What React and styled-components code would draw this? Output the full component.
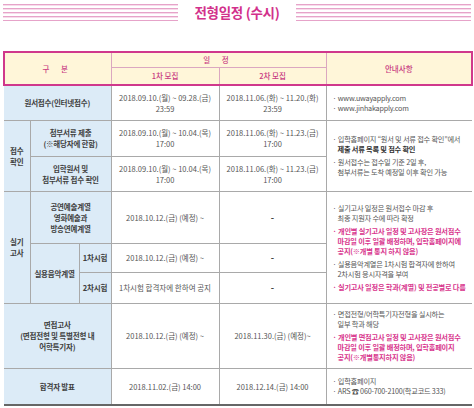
import React from 'react';
import styled, { createGlobalStyle } from 'styled-components';

const GlobalStyle = createGlobalStyle`
  html, body {
    margin: 0;
    padding: 0;
    background: #fff;
  }
  body {
    font-family: "Noto Sans CJK KR", "Noto Sans", sans-serif;
    color: #555;
  }
`;

const Page = styled.div`
  width: 474px;
  height: 408px;
  padding: 3px 3px 0;
  box-sizing: border-box;
  overflow: hidden;
`;

const TitleBar = styled.div`
  display: flex;
  align-items: center;
  gap: 16px;
  height: 18px;
  margin-bottom: 30px;
`;

const Lines = styled.div`
  flex: 1;
  height: 17px;
  background: repeating-linear-gradient(
    to bottom,
    #e6a3c9 0px,
    #e6a3c9 1px,
    #f7dceb 1px,
    #f7dceb 2px,
    transparent 2px,
    transparent 4px
  );
`;

const Title = styled.h1`
  margin: 0;
  font-size: 13.5px;
  font-weight: 700;
  color: #d2318b;
  line-height: 18px;
  letter-spacing: -0.3px;
  white-space: nowrap;
`;

const Table = styled.table`
  width: 468px;
  border-collapse: collapse;
  table-layout: fixed;
  font-size: 7.5px;
  line-height: 11px;
`;

const Head = styled.th`
  background: #fff6d9;
  color: #c83a82;
  font-weight: 500;
  font-size: 7.5px;
  letter-spacing: ${p => (p.$spread ? '5px' : '0')};
  border: 1px solid #dba7c0;
  ${p => p.$top && 'border-top: 2px solid #d0388c;'}
  ${p => p.$bottom && 'border-bottom: 2px solid #d0388c;'}
  ${p => p.$left && 'border-left: 2px solid #d0388c;'}
  ${p => p.$right && 'border-right: 2px solid #d0388c;'}
  padding: 0;
  text-align: center;
`;

const Row = styled.tr`
  height: ${p => p.$h}px;
`;

const Label = styled.td`
  background: #dcebf7;
  color: #3f3f3f;
  font-weight: 700;
  text-align: center;
  border: 1px solid #a9a9a9;
  border-left: none;
  padding: 0 2px;
  letter-spacing: -0.2px;
  ${p => p.$last && 'border-bottom: 2px solid #666;'}
`;

const Cell = styled.td`
  text-align: center;
  border: 1px solid #a9a9a9;
  padding: 0;
  color: #555;
  ${p => p.$dash && 'font-weight: 700; color: #444; font-size: 9px;'}
  ${p => p.$last && 'border-bottom: 2px solid #666;'}
`;

const Notes = styled.td`
  border: 1px solid #a9a9a9;
  border-right: none;
  padding: 2px 0 2px 6px;
  text-align: left;
  vertical-align: middle;
  font-size: 7.2px;
  line-height: 10px;
  letter-spacing: -0.2px;
  white-space: nowrap;
  ${p => p.$last && 'border-bottom: 2px solid #666;'}
`;

const Item = styled.div`
  padding-left: 5px;
  text-indent: -5px;
  margin-top: ${p => (p.$gap ? '3px' : '0')};
  color: ${p => (p.$pink ? '#d8358d' : '#555')};
  font-weight: ${p => (p.$pink ? 700 : 400)};
`;

const Strong = styled.span`
  font-weight: 700;
  color: #333;
`;

const Col = styled.col`
  width: ${p => p.$w}px;
`;

const Dates = ({ a, b }) => (
  <>
    {a}
    {b && <br />}
    {b}
  </>
);

const App = () => {
  return (
    <Page>
      <GlobalStyle />
      <TitleBar>
        <Lines />
        <Title>전형일정 (수시)</Title>
        <Lines />
      </TitleBar>

      <Table>
        <colgroup>
          <Col $w={26} />
          <Col $w={49} />
          <Col $w={32} />
          <Col $w={108} />
          <Col $w={107} />
          <Col $w={146} />
        </colgroup>
        <thead>
          <Row $h={15}>
            <Head colSpan={3} rowSpan={2} $top $bottom $left $spread>구 분</Head>
            <Head colSpan={2} $top $spread>일 정</Head>
            <Head rowSpan={2} $top $bottom $right>안내사항</Head>
          </Row>
          <Row $h={18}>
            <Head $bottom>1차 모집</Head>
            <Head $bottom>2차 모집</Head>
          </Row>
        </thead>
        <tbody>
          <Row $h={35}>
            <Label colSpan={3}>원서접수(인터넷접수)</Label>
            <Cell><Dates a="2018.09.10.(월) ~ 09.28.(금)" b="23:59" /></Cell>
            <Cell><Dates a="2018.11.06.(화) ~ 11.20.(화)" b="23:59" /></Cell>
            <Notes>
              <Item>· www.uwayapply.com</Item>
              <Item>· www.jinhakapply.com</Item>
            </Notes>
          </Row>
          <Row $h={36}>
            <Label rowSpan={2}>접수<br />확인</Label>
            <Label colSpan={2}>첨부서류 제출<br />(※해당자에 한함)</Label>
            <Cell><Dates a="2018.09.10.(월) ~ 10.04.(목)" b="17:00" /></Cell>
            <Cell><Dates a="2018.11.06.(화) ~ 11.23.(금)" b="17:00" /></Cell>
            <Notes rowSpan={2}>
              <Item>
                · 입학홈페이지 “원서 및 서류 접수 확인”에서<br />
                <Strong>제출 서류 목록 및 접수 확인</Strong>
              </Item>
              <Item $gap>· 원서접수는 접수일 기준 2일 후,<br />첨부서류는 도착 예정일 이후 확인 가능</Item>
            </Notes>
          </Row>
          <Row $h={35}>
            <Label colSpan={2}>입학원서 및<br />첨부서류 접수 확인</Label>
            <Cell><Dates a="2018.09.10.(월) ~ 10.04.(목)" b="17:00" /></Cell>
            <Cell><Dates a="2018.11.06.(화) ~ 11.23.(금)" b="17:00" /></Cell>
          </Row>
          <Row $h={52}>
            <Label rowSpan={3}>실기<br />고사</Label>
            <Label colSpan={2}>공연예술계열<br />영화예술과<br />방송연예계열</Label>
            <Cell>2018.10.12.(금) (예정) ~</Cell>
            <Cell $dash>-</Cell>
            <Notes rowSpan={3}>
              <Item>· 실기고사 일정은 원서접수 마감 후<br />최종 지원자 수에 따라 확정</Item>
              <Item $gap $pink>· 개인별 실기고사 일정 및 고사장은 원서접수<br />마감일 이후 일괄 배정하며, 입학홈페이지에<br />공지(※개별 통지 하지 않음)</Item>
              <Item $gap>· 실용음악계열은 1차시험 합격자에 한하여<br />2차시험 응시자격을 부여</Item>
              <Item $gap $pink>· 실기고사 일정은 학과(계열) 및 전공별로 다름</Item>
            </Notes>
          </Row>
          <Row $h={29}>
            <Label rowSpan={2}>실용음악계열</Label>
            <Label>1차시험</Label>
            <Cell>2018.10.12.(금) (예정) ~</Cell>
            <Cell $dash>-</Cell>
          </Row>
          <Row $h={31}>
            <Label>2차시험</Label>
            <Cell>1차시험 합격자에 한하여 공지</Cell>
            <Cell $dash>-</Cell>
          </Row>
          <Row $h={65}>
            <Label colSpan={3}>면접고사<br />(면접전형 및 특별전형 내<br />어학특기자)</Label>
            <Cell>2018.10.12.(금) (예정) ~</Cell>
            <Cell>2018.11.30.(금) (예정)~</Cell>
            <Notes>
              <Item>· 면접전형/어학특기자전형을 실시하는<br />일부 학과 해당</Item>
              <Item $gap $pink>· 개인별 면접고사 일정 및 고사장은 원서접수<br />마감일 이후 일괄 배정하며, 입학홈페이지<br />공지(※개별통지하지 않음)</Item>
            </Notes>
          </Row>
          <Row $h={37}>
            <Label colSpan={3} $last>합격자 발표</Label>
            <Cell $last>2018.11.02.(금) 14:00</Cell>
            <Cell $last>2018.12.14.(금) 14:00</Cell>
            <Notes $last>
              <Item>· 입학홈페이지</Item>
              <Item>· ARS ☎ 060-700-2100(학교코드 333)</Item>
            </Notes>
          </Row>
        </tbody>
      </Table>
    </Page>
  );
};

export default App;
